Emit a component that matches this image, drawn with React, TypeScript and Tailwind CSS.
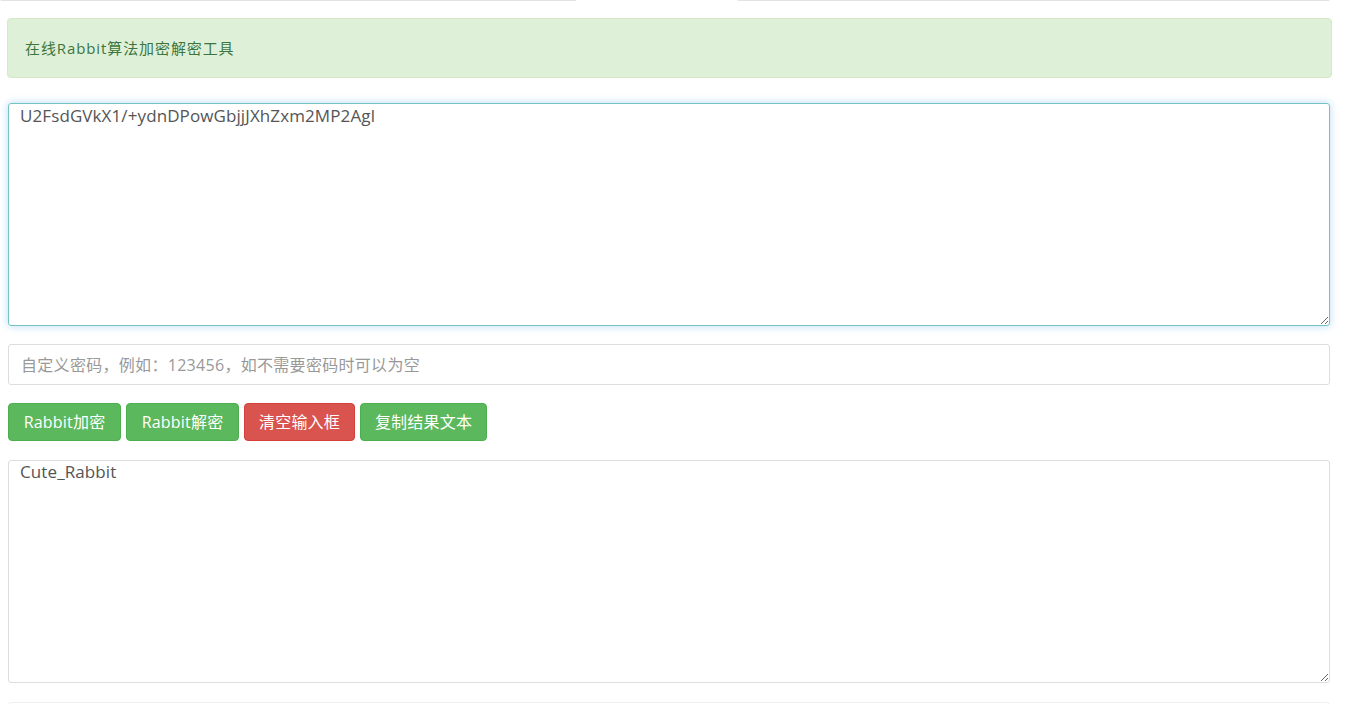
import React from "react";

const btn =
  "h-[38px] rounded-[4px] border text-white text-[16px] font-['Open_Sans','Noto_Sans_CJK_SC',sans-serif] tracking-[0.2px]";

export default function App() {
  return (
    <div className="w-[1358px] h-[704px] overflow-hidden bg-white font-['Open_Sans','Noto_Sans_CJK_SC',sans-serif]">
      <div className="flex gap-[160px] pr-[28px] h-[2px] -mt-[1px]">
        <div className="w-[577px] h-full border-b-2 border-[#e2e2e2] rounded-b-[3px]" />
        <div className="flex-1 h-full border-b-2 border-[#e2e2e2] rounded-b-[3px]" />
      </div>
      <div className="flex flex-col pl-[8px] pr-[28px] pt-[17px]">
        <div className="ml-[-1px] mr-[-2px] h-[60px] flex items-center px-[17px] bg-[#dff0d8] border border-[#d6e9c6] rounded-[4px] text-[#3c763d] text-[15px] tracking-[0.9px]">
          在线Rabbit算法加密解密工具
        </div>
        <textarea
          className="mt-[25px] h-[223px] w-full resize-y border border-[#74c3c4] rounded-[3px] px-[11px] py-[1px] text-[17px] tracking-[0.1px] leading-[22px] text-[#555] outline-none shadow-[0_0_8px_rgba(102,175,233,0.45)] font-['Open_Sans','Noto_Sans_CJK_SC',sans-serif]"
          defaultValue="U2FsdGVkX1/+ydnDPowGbjjJXhZxm2MP2AgI"
        />
        <input
          className="mt-[18px] h-[41px] w-full border border-[#ddd] rounded-[3px] px-[12px] text-[16px] tracking-[0.3px] text-[#555] placeholder:text-[#999] outline-none font-['Open_Sans','Noto_Sans_CJK_SC',sans-serif]"
          placeholder="自定义密码，例如：123456，如不需要密码时可以为空"
        />
        <div className="mt-[18px] flex gap-[5px]">
          <button className={btn + " w-[113px] bg-[#5cb85c] border-[#4cae4c]"}>Rabbit加密</button>
          <button className={btn + " w-[113px] bg-[#5cb85c] border-[#4cae4c]"}>Rabbit解密</button>
          <button className={btn + " w-[111px] bg-[#d9534f] border-[#d43f3a]"}>清空输入框</button>
          <button className={btn + " w-[127px] bg-[#5cb85c] border-[#4cae4c]"}>复制结果文本</button>
        </div>
        <textarea
          className="mt-[19px] h-[223px] w-full resize-y border border-[#ddd] rounded-[3px] px-[11px] py-0 text-[17px] tracking-[0.1px] leading-[22px] text-[#555] outline-none font-['Open_Sans','Noto_Sans_CJK_SC',sans-serif]"
          defaultValue="Cute_Rabbit"
        />
        <div className="mt-[19px] h-[40px] w-full border-t border-x border-[#eee] rounded-t-[4px]" />
      </div>
    </div>
  );
}
